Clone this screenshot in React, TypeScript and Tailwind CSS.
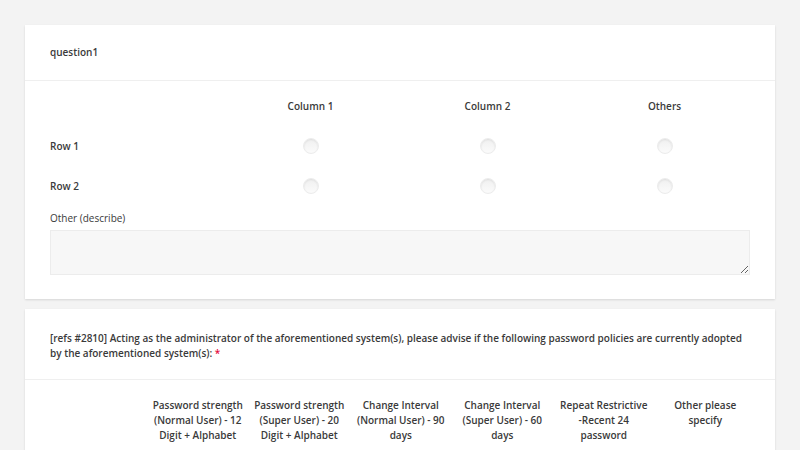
import React from "react";

const cols1 = ["Column 1", "Column 2", "Others"];
const rows1 = ["Row 1", "Row 2"];

const cols2 = [
    "Password strength (Normal User) - 12 Digit + Alphabet",
    "Password strength (Super User) - 20 Digit + Alphabet",
    "Change Interval (Normal User) - 90 days",
    "Change Interval (Super User) - 60 days",
    "Repeat Restrictive -\u2060Recent 24 password",
    "Other please specify",
];

const Radio = () => (
    <div className="w-4 h-4 rounded-full border border-[#ececec] bg-gradient-to-b from-[#f0f0f0] to-[#fbfbfb] shadow-[inset_0_1px_2px_rgba(0,0,0,0.08)]"></div>
);

const Card = ({ children }: { children: React.ReactNode }) => (
    <div className="bg-white shadow-[0_1px_2px_rgba(0,0,0,0.12)]">{children}</div>
);

const App = () => {
    return (
        <div className="h-[450px] bg-[#f3f3f3] px-[25px] pt-[25px] flex flex-col gap-[10px] text-[#3a3a3a] text-[10px] leading-[15px] font-['Open_Sans',sans-serif] overflow-hidden">

            <Card>
                <div className="px-[25px] pt-[20px] pb-[20px] border-b border-[#efefef] font-semibold">question1</div>

                <div className="px-[25px] pt-[5px] pb-[24px]">
                    <div className="grid grid-cols-[172px_177px_177px_177px] font-semibold">
                        <div className="h-10"></div>
                        {cols1.map(c => (
                            <div key={c} className="h-10 flex items-center justify-center">{c}</div>
                        ))}
                        {rows1.map(r => (
                            <React.Fragment key={r}>
                                <div className="h-10 flex items-center">{r}</div>
                                {cols1.map(c => (
                                    <div key={c} className="h-10 flex items-center justify-center"><Radio /></div>
                                ))}
                            </React.Fragment>
                        ))}
                    </div>

                    <p className="mt-[5px]">Other (describe)</p>
                    <textarea className="mt-[4px] block w-full h-[45px] bg-[#f7f7f7] border border-[#ececec] outline-none resize-y"></textarea>
                </div>
            </Card>

            <Card>
                <div className="px-[25px] pt-[22px] pb-[18px] border-b border-[#efefef] font-semibold">
                    [refs #2810] Acting as the administrator of the aforementioned system(s), please advise if the following password policies are currently adopted by the aforementioned system(s): <span className="text-[#e50a3e]">*</span>
                </div>

                <div className="px-[25px] pt-[18px] pb-6">
                    <div className="grid grid-cols-[97px_repeat(6,101.5px)] font-semibold">
                        <div></div>
                        {cols2.map(c => (
                            <div key={c} className="px-[3px] text-center">{c}</div>
                        ))}
                    </div>
                </div>
            </Card>

        </div>
    );
};

export default App;
